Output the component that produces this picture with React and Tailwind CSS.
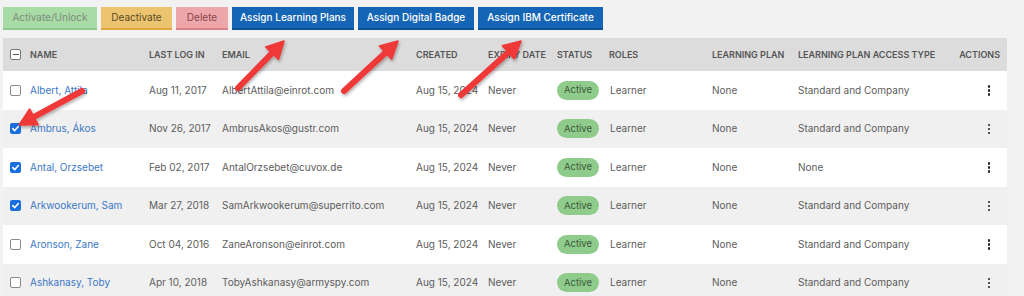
import React from "react";

const USERS = [
  { name: "Albert, Attila", login: "Aug 11, 2017", email: "AlbertAttila@einrot.com", access: "Standard and Company", checked: false },
  { name: "Ambrus, Ákos", login: "Nov 26, 2017", email: "AmbrusAkos@gustr.com", access: "Standard and Company", checked: true },
  { name: "Antal, Orzsebet", login: "Feb 02, 2017", email: "AntalOrzsebet@cuvox.de", access: "None", checked: true },
  { name: "Arkwookerum, Sam", login: "Mar 27, 2018", email: "SamArkwookerum@superrito.com", access: "Standard and Company", checked: true },
  { name: "Aronson, Zane", login: "Oct 04, 2016", email: "ZaneAronson@einrot.com", access: "Standard and Company", checked: false },
  { name: "Ashkanasy, Toby", login: "Apr 10, 2018", email: "TobyAshkanasy@armyspy.com", access: "Standard and Company", checked: false },
];

const COLS = "grid grid-cols-[27px_119px_73px_194px_72px_69px_52px_103px_86px_160px_49px]";

function Box({ checked }) {
  if (checked) {
    return (
      <span className="flex h-[11px] w-[11px] items-center justify-center rounded-[2px] bg-[#1a6fe0]">
        <svg width="9" height="9" viewBox="0 0 10 10">
          <path d="M2 5.2 L4.2 7.3 L8.2 2.8" fill="none" stroke="#fff" strokeWidth="1.8" strokeLinecap="round" strokeLinejoin="round" />
        </svg>
      </span>
    );
  }
  return <span className="block h-[11px] w-[11px] rounded-[2px] border border-[#8a8a8a] bg-white" />;
}

function Kebab() {
  return (
    <span className="flex flex-col gap-[1.5px]">
      <span className="h-[2.5px] w-[2.5px] rounded-full bg-[#222]" />
      <span className="h-[2.5px] w-[2.5px] rounded-full bg-[#222]" />
      <span className="h-[2.5px] w-[2.5px] rounded-full bg-[#222]" />
    </span>
  );
}

function Arrow({ x1, y1, x2, y2 }) {
  const a = Math.atan2(y2 - y1, x2 - x1);
  const len = 17, half = 9;
  const bx = x2 - len * Math.cos(a), by = y2 - len * Math.sin(a);
  const px = -Math.sin(a) * half, py = Math.cos(a) * half;
  return (
    <g>
      <line x1={x1} y1={y1} x2={bx + 2 * Math.cos(a)} y2={by + 2 * Math.sin(a)} stroke="#ef3838" strokeWidth="6" strokeLinecap="round" />
      <polygon points={`${x2},${y2} ${bx + px},${by + py} ${bx - px},${by - py}`} fill="#ef3838" stroke="#ef3838" strokeWidth="1.5" strokeLinejoin="round" />
    </g>
  );
}

export default function App() {
  return (
    <div className="relative h-[296px] w-[1024px] overflow-hidden bg-[#f2f2f2] font-['Inter','Liberation_Sans',sans-serif] text-[10px] text-[#5c5c5c]">
      <div className="flex gap-[4px] px-[3px] pt-[7px] text-[10px]">
        <button className="h-[23px] w-[94px] border-b-2 border-[#8cc88c] bg-[#a9dba7] text-[#7c8c7c]">Activate/Unlock</button>
        <button className="h-[23px] w-[71px] border-b-2 border-[#e0a640] bg-[#ecc470] text-[#5b4a28]">Deactivate</button>
        <button className="h-[23px] w-[52px] border-b-2 border-[#de8088] bg-[#eda7aa] text-[#874548]">Delete</button>
        <button className="h-[23px] w-[122px] border-b-2 border-[#0b4f94] bg-[#1565b6] font-medium text-white">Assign Learning Plans</button>
        <button className="h-[23px] w-[116px] border-b-2 border-[#0b4f94] bg-[#1565b6] font-medium text-white">Assign Digital Badge</button>
        <button className="h-[23px] w-[125px] border-b-2 border-[#0b4f94] bg-[#1565b6] font-medium text-white">Assign IBM Certificate</button>
      </div>

      <div className="ml-[3px] mt-[8px] w-[1004px]">
        <div className={`${COLS} h-[33px] items-center bg-[#dcdcdc] text-[9px] font-semibold uppercase text-[#555]`}>
          <span className="flex justify-center pr-[2px]">
            <span className="flex h-[11px] w-[11px] items-center justify-center rounded-[2px] border border-[#777] bg-white">
              <span className="h-[1.5px] w-[6px] bg-[#555]" />
            </span>
          </span>
          <span>Name</span>
          <span>Last Log In</span>
          <span>Email</span>
          <span>Created</span>
          <span>Expiry Date</span>
          <span>Status</span>
          <span>Roles</span>
          <span>Learning Plan</span>
          <span>Learning Plan Access Type</span>
          <span className="pr-[7px] text-right">Actions</span>
        </div>
        {USERS.map((u, i) => (
          <div key={u.name} className={`${COLS} h-[38.5px] items-center ${i % 2 ? "bg-[#f0f0f0]" : "bg-white"}`}>
            <span className="flex justify-center pr-[2px]"><Box checked={u.checked} /></span>
            <span className="text-[#3b78c6]">{u.name}</span>
            <span>{u.login}</span>
            <span>{u.email}</span>
            <span>Aug 15, 2024</span>
            <span>Never</span>
            <span>
              <span className="inline-flex h-[19px] w-[42px] items-center justify-center rounded-full bg-[#8fcb8b] text-[9.5px] text-[#3d5a3b]">Active</span>
            </span>
            <span className="pl-[1px]">Learner</span>
            <span>None</span>
            <span>{u.access}</span>
            <span className="flex justify-end pr-[17px]"><Kebab /></span>
          </div>
        ))}
      </div>

      <svg className="pointer-events-none absolute left-0 top-0" width="1024" height="296">
        <defs>
          <filter id="sh" x="-20%" y="-20%" width="140%" height="140%">
            <feDropShadow dx="1" dy="2" stdDeviation="1.5" floodColor="#000" floodOpacity="0.3" />
          </filter>
        </defs>
        <g filter="url(#sh)">
          <Arrow x1={238} y1={88} x2={284} y2={41} />
          <Arrow x1={344} y1={91} x2={398} y2={41} />
          <Arrow x1={461} y1={95} x2={521} y2={41} />
          <Arrow x1={82} y1={91} x2={19} y2={125} />
        </g>
      </svg>
    </div>
  );
}
